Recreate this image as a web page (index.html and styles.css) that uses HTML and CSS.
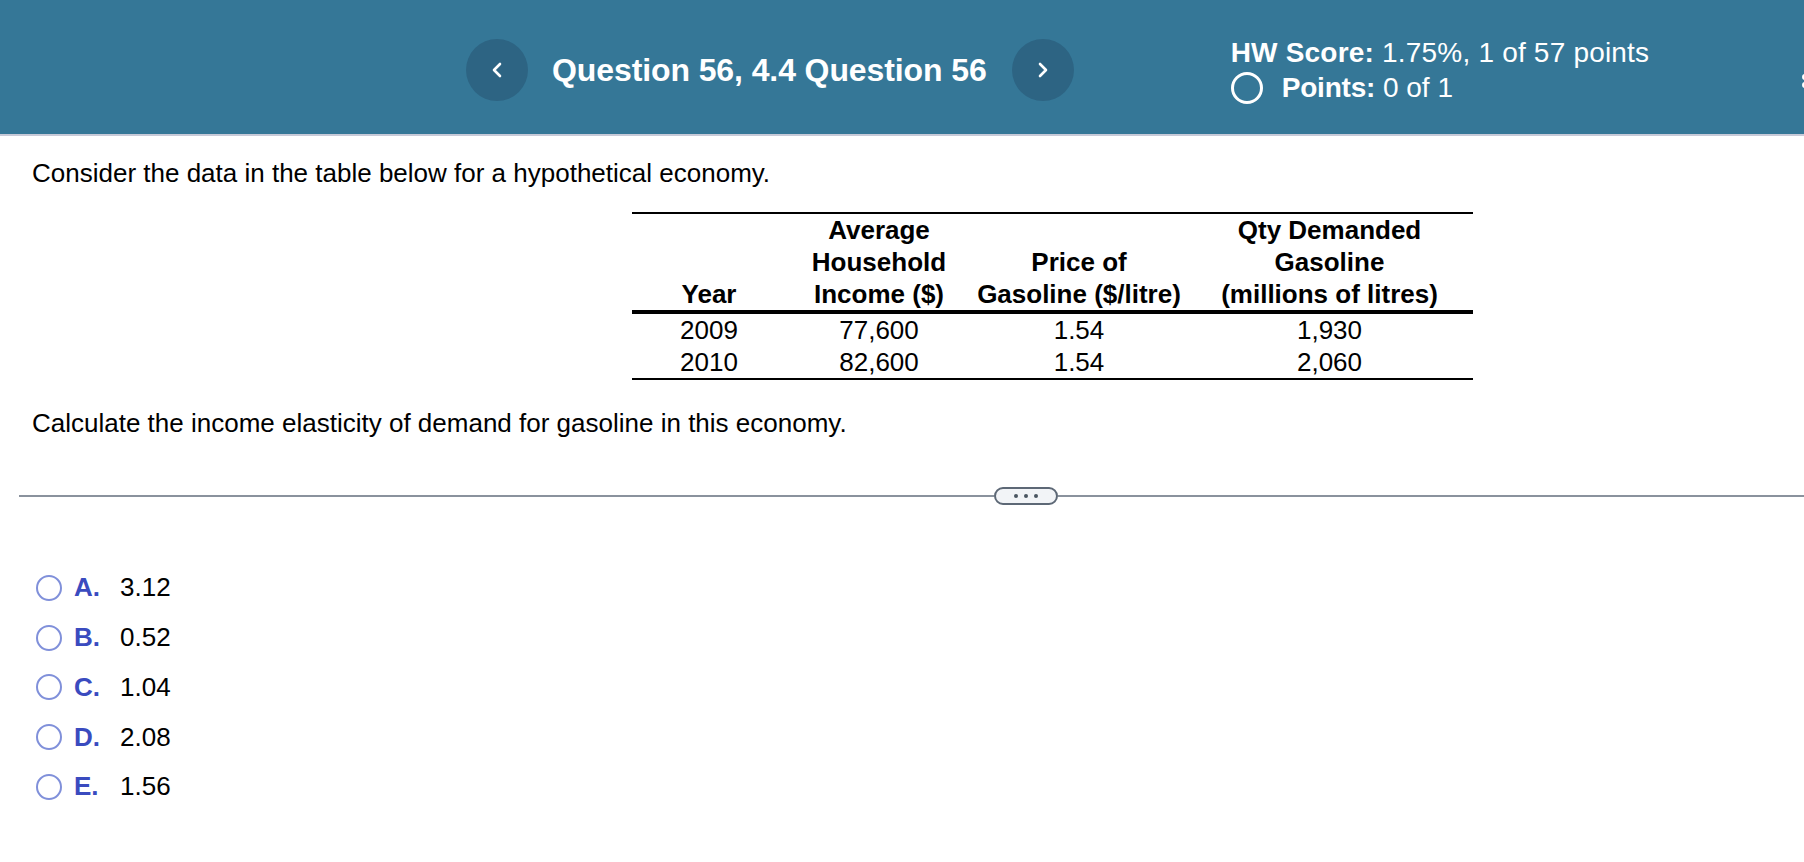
FILE: index.html
```html
<!DOCTYPE html>
<html lang="en">
<head>
<meta charset="utf-8">
<title>Question 56</title>
<link rel="stylesheet" href="styles.css">
</head>
<body>
<header class="topbar">
  <button class="nav-btn" aria-label="Previous question">
    <svg width="12" height="16" viewBox="0 0 12 16"><path d="M9 2 L3 8 L9 14" fill="none" stroke="#fff" stroke-width="2.6" stroke-linecap="round" stroke-linejoin="round"/></svg>
  </button>
  <h1 class="q-title">Question 56, 4.4 Question 56</h1>
  <button class="nav-btn" aria-label="Next question">
    <svg width="12" height="16" viewBox="0 0 12 16"><path d="M3 2 L9 8 L3 14" fill="none" stroke="#fff" stroke-width="2.6" stroke-linecap="round" stroke-linejoin="round"/></svg>
  </button>
  <div class="score">
    <div class="score-line"><b>HW Score:</b> 1.75%, 1 of 57 points</div>
    <div class="score-line points"><span class="ring"></span><b>Points:</b>&nbsp;0 of 1</div>
  </div>
  <div class="edge-icon"><span></span><span></span></div>
</header>

<main class="content">
  <p class="text first">Consider the data in the table below for a hypothetical economy.</p>
  <table class="data">
    <colgroup>
      <col class="c1"><col class="c2"><col class="c3"><col class="c4">
    </colgroup>
    <thead>
      <tr>
        <th>Year</th>
        <th>Average<br>Household<br>Income ($)</th>
        <th>Price of<br>Gasoline ($/litre)</th>
        <th>Qty Demanded<br>Gasoline<br>(millions of litres)</th>
      </tr>
    </thead>
    <tbody>
      <tr><td>2009</td><td>77,600</td><td>1.54</td><td>1,930</td></tr>
      <tr><td>2010</td><td>82,600</td><td>1.54</td><td>2,060</td></tr>
    </tbody>
  </table>
  <p class="text second">Calculate the income elasticity of demand for gasoline in this economy.</p>
</main>

<div class="divider">
  <div class="rule"></div>
  <div class="pill"><i></i><i></i><i></i></div>
  <div class="rule grow"></div>
</div>

<ul class="options">
  <li class="opt"><span class="radio"></span><span class="letter">A.</span><span class="val">3.12</span></li>
  <li class="opt"><span class="radio"></span><span class="letter">B.</span><span class="val">0.52</span></li>
  <li class="opt"><span class="radio"></span><span class="letter">C.</span><span class="val">1.04</span></li>
  <li class="opt"><span class="radio"></span><span class="letter">D.</span><span class="val">2.08</span></li>
  <li class="opt"><span class="radio"></span><span class="letter">E.</span><span class="val">1.56</span></li>
</ul>
</body>
</html>
```
FILE: styles.css
```css
* { box-sizing: border-box; }
html, body { margin: 0; padding: 0; background: #fff; }
body {
  font-family: "Liberation Sans", Arial, Helvetica, sans-serif;
  color: #000;
  overflow: hidden;
}

.topbar {
  height: 136px;
  background: #357797;
  border-bottom: 2px solid #c7cad8;
  display: flex;
  align-items: center;
  padding: 6px 0 0 466px;
  color: #fff;
  overflow: hidden;
}
.nav-btn {
  width: 62px;
  height: 62px;
  border-radius: 50%;
  border: 0;
  padding: 0;
  background: #2d6483;
  display: flex;
  align-items: center;
  justify-content: center;
  flex: none;
}
.q-title {
  margin: 0 25px 0 24px;
  font-size: 32px;
  font-weight: bold;
  line-height: 40px;
  white-space: nowrap;
  letter-spacing: -0.1px;
}
.score {
  margin-left: 157px;
  font-size: 28px;
  line-height: 35px;
  white-space: nowrap;
}
.score-line:first-child { letter-spacing: 0.2px; }
.score-line b { font-weight: bold; }
.points { display: flex; align-items: center; }
.ring {
  width: 32px;
  height: 32px;
  border: 3px solid #fff;
  border-radius: 50%;
  margin-right: 19px;
  flex: none;
}
.points b { letter-spacing: -0.2px; }
.edge-icon {
  margin-left: auto;
  margin-right: -4px;
  width: 6px;
  height: 40px;
  display: flex;
  flex-direction: column;
  justify-content: flex-end;
  gap: 2px;
  padding-bottom: 2px;
}
.edge-icon span {
  display: block;
  width: 6px;
  height: 6px;
  border-radius: 3px;
  background: #fff;
}

.content { padding-left: 32px; }
.text {
  margin: 0;
  font-size: 26px;
  line-height: 30px;
}
.text.first { padding-top: 22px; }
.text.second { margin-top: 28px; }

.data {
  margin: 24px 0 0 600px;
  width: 841px;
  table-layout: fixed;
  border-collapse: collapse;
  font-size: 26px;
  line-height: 32px;
  border-top: 2px solid #000;
  border-bottom: 2px solid #000;
}
.c1 { width: 154px; }
.c2 { width: 186px; }
.c3 { width: 214px; }
.c4 { width: 287px; }
.data th {
  font-weight: bold;
  vertical-align: bottom;
  text-align: center;
  padding: 0;
  border-bottom: 4px solid #000;
  white-space: nowrap;
}
.data td {
  text-align: center;
  padding: 0;
}

.divider {
  display: flex;
  align-items: center;
  margin-top: 49px;
  padding-left: 19px;
  height: 18px;
}
.rule {
  width: 975px;
  height: 2px;
  background: #8a929d;
}
.rule.grow { flex: 1; width: auto; }
.pill {
  width: 64px;
  height: 18px;
  border: 2px solid #5d6876;
  border-radius: 9px;
  background: #f2f4f7;
  display: flex;
  align-items: center;
  justify-content: center;
  gap: 6px;
  flex: none;
}
.pill i {
  display: block;
  width: 4px;
  height: 4px;
  border-radius: 50%;
  background: #4b5561;
}

.options {
  list-style: none;
  margin: 58px 0 0 0;
  padding: 0 0 0 36px;
}
.opt {
  height: 49.75px;
  display: flex;
  align-items: center;
  font-size: 26px;
}
.radio {
  width: 26px;
  height: 26px;
  border: 2.5px solid #8090da;
  border-radius: 50%;
  flex: none;
  margin-right: 12px;
}
.letter {
  width: 46px;
  color: #3a4bbf;
  font-weight: bold;
}
.val { color: #000; }
```
